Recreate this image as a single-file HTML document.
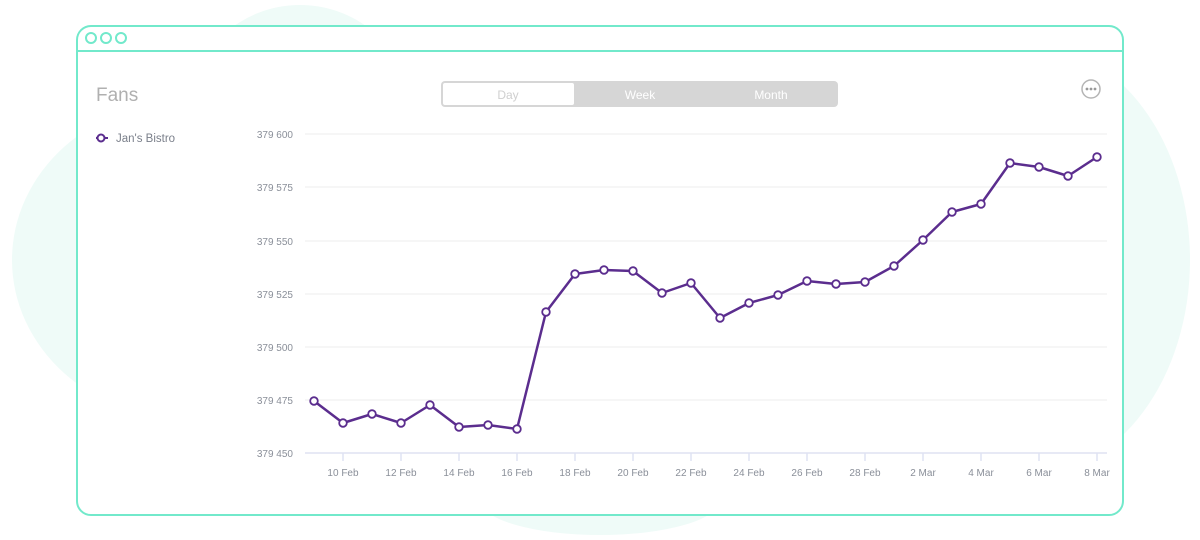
<!DOCTYPE html>
<html><head><meta charset="utf-8"><style>
body{margin:0;width:1200px;height:540px;background:#fff;overflow:hidden;font-family:"Liberation Sans",sans-serif}
</style></head><body>
<svg width="1200" height="540" xmlns="http://www.w3.org/2000/svg" style="position:absolute;left:0;top:0">
<g fill="#effbf8">
<ellipse cx="190" cy="260" rx="178" ry="160"/>
<ellipse cx="300" cy="110" rx="110" ry="105"/>
<ellipse cx="1030" cy="260" rx="160" ry="215"/>
<ellipse cx="600" cy="500" rx="120" ry="35"/>
</g>
<rect x="77" y="26" width="1046" height="489" rx="14" fill="#fff" stroke="#72e9cb" stroke-width="2"/>
<line x1="77" y1="51" x2="1123" y2="51" stroke="#72e9cb" stroke-width="2"/>
<g fill="none" stroke="#72e9cb" stroke-width="2">
<circle cx="91" cy="38" r="5"/><circle cx="106" cy="38" r="5"/><circle cx="121" cy="38" r="5"/>
</g>
<text x="96" y="101" font-size="19" fill="#b0b0b0">Fans</text>
<rect x="441" y="81" width="397" height="26" rx="4" fill="#d6d6d6"/>
<rect x="443" y="83" width="131" height="22" rx="2" fill="#fff"/>
<g font-size="12" text-anchor="middle" fill="#fff">
<text x="508" y="99" fill="#cfcfcf">Day</text><text x="640" y="99">Week</text><text x="771" y="99">Month</text>
</g>
<circle cx="1091" cy="89" r="9" fill="none" stroke="#b5b5b5" stroke-width="1.5"/>
<g fill="#999"><circle cx="1087" cy="89" r="1.4"/><circle cx="1091" cy="89" r="1.4"/><circle cx="1095" cy="89" r="1.4"/></g>
<line x1="96" y1="138" x2="108" y2="138" stroke="#5b2d8e" stroke-width="2"/>
<circle cx="101" cy="138" r="3.5" fill="#fff" stroke="#5b2d8e" stroke-width="2"/>
<text x="116" y="142" font-size="11.5" fill="#7a7f8a">Jan's Bistro</text>
<g stroke="#ededed" stroke-width="1">
<line x1="305" y1="134" x2="1107" y2="134"/><line x1="305" y1="187" x2="1107" y2="187"/>
<line x1="305" y1="241" x2="1107" y2="241"/><line x1="305" y1="294" x2="1107" y2="294"/>
<line x1="305" y1="347" x2="1107" y2="347"/><line x1="305" y1="400" x2="1107" y2="400"/>
</g>
<line x1="305" y1="453" x2="1107" y2="453" stroke="#dfe2f2" stroke-width="1.5"/>
<g stroke="#dfe2f2" stroke-width="1.5">
<line x1="343" y1="453" x2="343" y2="461"/><line x1="401" y1="453" x2="401" y2="461"/><line x1="459" y1="453" x2="459" y2="461"/><line x1="517" y1="453" x2="517" y2="461"/><line x1="575" y1="453" x2="575" y2="461"/><line x1="633" y1="453" x2="633" y2="461"/><line x1="691" y1="453" x2="691" y2="461"/><line x1="749" y1="453" x2="749" y2="461"/><line x1="807" y1="453" x2="807" y2="461"/><line x1="865" y1="453" x2="865" y2="461"/><line x1="923" y1="453" x2="923" y2="461"/><line x1="981" y1="453" x2="981" y2="461"/><line x1="1039" y1="453" x2="1039" y2="461"/><line x1="1097" y1="453" x2="1097" y2="461"/>
</g>
<g font-size="10" fill="#8a8f99" text-anchor="end">
<text x="293" y="138">379 600</text><text x="293" y="191">379 575</text><text x="293" y="245">379 550</text><text x="293" y="298">379 525</text><text x="293" y="351">379 500</text><text x="293" y="404">379 475</text><text x="293" y="457">379 450</text>
</g>
<g font-size="10" fill="#8a8f99" text-anchor="middle">
<text x="343" y="476">10 Feb</text><text x="401" y="476">12 Feb</text><text x="459" y="476">14 Feb</text><text x="517" y="476">16 Feb</text><text x="575" y="476">18 Feb</text><text x="633" y="476">20 Feb</text><text x="691" y="476">22 Feb</text><text x="749" y="476">24 Feb</text><text x="807" y="476">26 Feb</text><text x="865" y="476">28 Feb</text><text x="923" y="476">2 Mar</text><text x="981" y="476">4 Mar</text><text x="1039" y="476">6 Mar</text><text x="1097" y="476">8 Mar</text>
</g>
<polyline fill="none" stroke="#5b2d8e" stroke-width="2.5" stroke-linejoin="round" points="314,401 343,423 372,414 401,423 430,405 459,427 488,425 517,429 546,312 575,274 604,270 633,271 662,293 691,283 720,318 749,303 778,295 807,281 836,284 865,282 894,266 923,240 952,212 981,204 1010,163 1039,167 1068,176 1097,157"/>
<g fill="#fff" stroke="#5b2d8e" stroke-width="1.8">
<circle cx="314" cy="401" r="3.8"/><circle cx="343" cy="423" r="3.8"/><circle cx="372" cy="414" r="3.8"/><circle cx="401" cy="423" r="3.8"/><circle cx="430" cy="405" r="3.8"/><circle cx="459" cy="427" r="3.8"/><circle cx="488" cy="425" r="3.8"/><circle cx="517" cy="429" r="3.8"/><circle cx="546" cy="312" r="3.8"/><circle cx="575" cy="274" r="3.8"/><circle cx="604" cy="270" r="3.8"/><circle cx="633" cy="271" r="3.8"/><circle cx="662" cy="293" r="3.8"/><circle cx="691" cy="283" r="3.8"/><circle cx="720" cy="318" r="3.8"/><circle cx="749" cy="303" r="3.8"/><circle cx="778" cy="295" r="3.8"/><circle cx="807" cy="281" r="3.8"/><circle cx="836" cy="284" r="3.8"/><circle cx="865" cy="282" r="3.8"/><circle cx="894" cy="266" r="3.8"/><circle cx="923" cy="240" r="3.8"/><circle cx="952" cy="212" r="3.8"/><circle cx="981" cy="204" r="3.8"/><circle cx="1010" cy="163" r="3.8"/><circle cx="1039" cy="167" r="3.8"/><circle cx="1068" cy="176" r="3.8"/><circle cx="1097" cy="157" r="3.8"/>
</g>
</svg>
</body></html>
